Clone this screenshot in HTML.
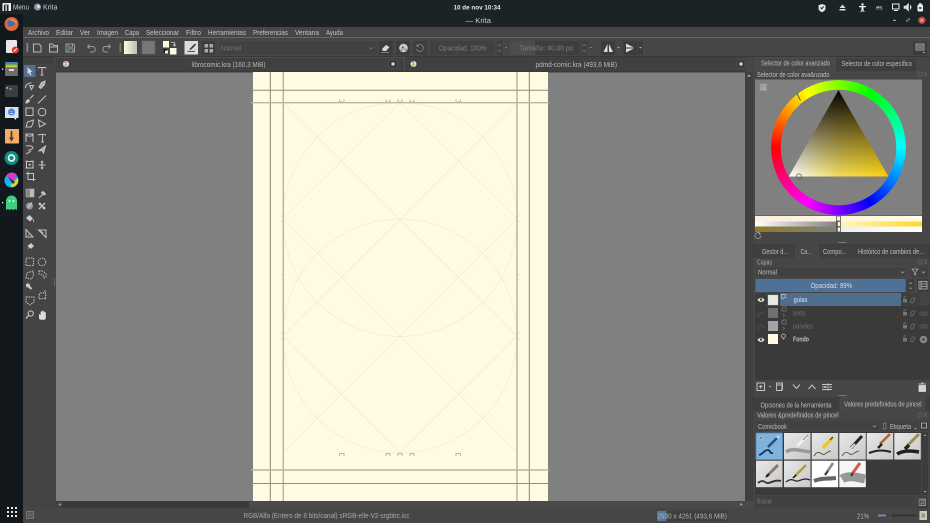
<!DOCTYPE html>
<html lang="es"><head><meta charset="utf-8"><title>Krita</title>
<style>
html,body{margin:0;padding:0;width:930px;height:523px;overflow:hidden;background:#454545}
#w{position:absolute;left:0;top:0;width:930px;height:523px;overflow:hidden;filter:blur(.38px)}
svg{position:absolute;left:0;top:0}
text{font-family:"Liberation Sans",sans-serif;font-size:7.2px;fill:#c4c4c4}
#wheel{position:absolute;left:771px;top:80px;width:135px;height:135px;border-radius:50%;
background:conic-gradient(from 270deg,#f00,#ff0,#0f0,#0ff,#00f,#f0f,#f00);
-webkit-mask:radial-gradient(circle,transparent 57.5px,#000 58px);mask:radial-gradient(circle,transparent 57.5px,#000 58px)}
</style></head><body><div id="w">
<svg width="930" height="523" viewBox="0 0 930 523">
<defs>
<linearGradient id="sw" x1="0" x2="1"><stop offset="0" stop-color="#fffbe3"/><stop offset="1" stop-color="#c2bda8"/></linearGradient>
<linearGradient id="r1" x1="0" x2="1"><stop offset="0" stop-color="#ffeee2"/><stop offset="1" stop-color="#fffce0"/></linearGradient>
<linearGradient id="r2a" x1="0" x2="1"><stop offset="0" stop-color="#fff"/><stop offset="1" stop-color="#808080"/></linearGradient>
<linearGradient id="r2b" x1="0" x2="1"><stop offset="0" stop-color="#fff6c0"/><stop offset="1" stop-color="#ffd72a"/></linearGradient>
<linearGradient id="r3a" x1="0" x2="1"><stop offset="0" stop-color="#8f7c20"/><stop offset="1" stop-color="#808080"/></linearGradient>
<linearGradient id="r3b" x1="0" x2="1"><stop offset="0" stop-color="#eee"/><stop offset="1" stop-color="#fff"/></linearGradient>
<linearGradient id="th" x1="0" x2="1" y1="0" y2="1"><stop offset="0" stop-color="#e8e8e8"/><stop offset="1" stop-color="#c8c8c8"/></linearGradient>
</defs>
<!-- desktop panels -->
<rect width="930" height="27" fill="#1c2327"/>
<rect y="14" width="23" height="509" fill="#12181c"/>
<!-- window background -->
<rect x="23" y="27" width="907" height="496" fill="#464646"/>
<rect x="23" y="37" width="907" height="1" fill="#666"/>
<rect x="23" y="56" width="907" height="1" fill="#383838"/>
<!-- left tool panel -->
<rect x="23" y="57" width="33" height="451" fill="#444"/>
<rect x="23" y="57" width="30" height="7" fill="#3e3e3e"/>
<!-- tab bar -->
<rect x="56" y="57" width="690" height="15" fill="#404040"/>
<rect x="56" y="57" width="348" height="1" fill="#4e4e4e"/>
<rect x="404" y="57" width="1" height="15" fill="#4e4e4e"/>
<!-- canvas -->
<rect x="56" y="72" width="689" height="429" fill="#808080"/>
<rect x="56" y="71" width="689" height="1.5" fill="#3a3a3a"/>
<rect x="253" y="72" width="295" height="429" fill="#fffbe3"/>
<g fill="none" stroke="#efebd4" stroke-width=".7">
<circle cx="400" cy="219.5" r="117"/><circle cx="400" cy="336" r="117"/>
<path d="M283 102.7L517 336M517 102.7L283 336M400 102.7L283 219L517 452.5M400 102.7L517 219L283 452.5M283 336L400 452.5L517 336"/>
</g>
<g fill="none" stroke="#a8a594" stroke-width=".8">
<path d="M339.500 99.500v2.500h4.500v-2.500M386 99.500v2.500h4v-2.500M398 99.500v2.500h4v-2.500M410 99.500v2.500h4v-2.500M456 99.500v2.500h4.500v-2.500"/>
<path d="M339.500 456v-2.500h4.500v2.500M386 456v-2.500h4v2.500M398 456v-2.500h4v2.500M410 456v-2.500h4v2.500M456 456v-2.500h4.500v2.500"/>
</g>
<g fill="none" stroke="#dbd8c2" stroke-width=".8">
<path d="M281 216h3M281 221.500h3M281 274h3M281 280h3M281 333h3M281 339h3M517 216h2.500M517 221.500h2.500M517 274h2.500M517 280h2.500M517 333h2.500M517 339h2.500"/>
</g>
<g fill="none">
<path d="M270.300 72V501M529.300 72V501" stroke="#84847a" stroke-width="1"/>
<path d="M283.300 72V501M517 72V501" stroke="#b8b5a4" stroke-width="1.500"/>
<path d="M251 90.200H549M251 483.500H549" stroke="#8e8c80" stroke-width="1"/>
<path d="M251 102.700H549M251 470H549" stroke="#b8b5a4" stroke-width="1.400"/>
</g>
<!-- scrollbars -->
<rect x="745" y="72" width="8" height="429" fill="#3f3f3f"/>
<path d="M747 76.500l2-2 2 2z" fill="#bbb"/><path d="M747 496l2 2 2-2z" fill="#bbb"/>
<rect x="56" y="501" width="697" height="7" fill="#4a4a4a"/>
<rect x="63" y="501" width="186" height="7" fill="#3a3a3a"/>
<rect x="56" y="501" width="7" height="7" fill="#404040"/>
<path d="M60.500 503l-2 1.500 2 1.500z" fill="#bbb"/><path d="M740.500 503l2 1.500-2 1.500z" fill="#bbb"/>
<rect x="745" y="491" width="8" height="10" fill="#3f3f3f"/>
<!-- top bar text -->
<rect x="2.500" y="3" width="8.500" height="8" fill="#eee"/><rect x="4" y="5" width="1.500" height="6" fill="#1c2327"/><rect x="6.800" y="5" width="1.700" height="6" fill="#1c2327"/><rect x="4" y="3.800" width="4.500" height="1.200" fill="#1c2327" opacity=".35"/>
<text x="13" y="9.500" textLength="16" lengthAdjust="spacingAndGlyphs" style="fill:#d0d0d0">Menu</text>
<circle cx="37.500" cy="7" r="3.500" fill="#8a9aa0"/><circle cx="38.500" cy="6.500" r="1.500" fill="#dde"/>
<text x="43" y="9.500" textLength="14.500" lengthAdjust="spacingAndGlyphs" style="fill:#d0d0d0">Krita</text>
<text x="453.500" y="9.500" textLength="47" lengthAdjust="spacingAndGlyphs" style="fill:#e6e6e6;font-weight:bold;font-size:6.400px">10 de nov  10:34</text>
<text x="465.500" y="23" textLength="25.500" lengthAdjust="spacingAndGlyphs" style="fill:#c8cccc;font-size:7.500px">— Krita</text>
<!-- tray -->
<path d="M822 4l3.500 1.200v3c0 2-1.500 3-3.500 4-2-1-3.500-2-3.500-4v-3z" fill="#e4e4e4"/><path d="M820.500 7.500l1.200 1.300 2-2.300" stroke="#1c2327" fill="none"/>
<path d="M842.500 4.500l3 3.500h-6zM839.500 9h6v1.500h-6z" fill="#ddd"/>
<circle cx="862.500" cy="4.500" r="1.200" fill="#eee"/><path d="M859 6h7v1.200h-2.500v3l1.300 1.800h-1.300l-1-1.500-1 1.500h-1.300l1.300-1.800v-3H859z" fill="#eee"/>
<text x="876" y="9.500" textLength="6.500" style="fill:#ddd;font-size:6.400px">es</text>
<rect x="892.500" y="4" width="6.500" height="5" fill="none" stroke="#eee"/><path d="M894 10.500h4" stroke="#eee"/>
<path d="M904 6h2l2.500-2.500V11L906 8.500h-2zM910 5c1.500 1 1.500 3.500 0 4.500" fill="#ddd" stroke="#ddd" stroke-width=".6"/>
<rect x="917.500" y="4.500" width="5.500" height="7" rx="1" fill="#eee"/><rect x="919" y="3.200" width="2.500" height="1.500" fill="#eee"/><rect x="919" y="7" width="2.500" height="2" fill="#555"/>
<path d="M893 20.300h3" stroke="#bbb"/><path d="M906.500 21.500l3-3M906.500 19.500v2h2M909.500 20.500v-2h-2" stroke="#888" stroke-width=".6" fill="none"/>
<circle cx="921.800" cy="20.300" r="3.700" fill="#c0483c"/><path d="M920.300 18.800l3 3M923.300 18.800l-3 3" stroke="#f0c0b8" stroke-width=".8"/>
<!-- dock -->
<circle cx="11.500" cy="24" r="7" fill="#e2643a"/><circle cx="11.500" cy="23.500" r="4" fill="#3b6fc0"/><path d="M8.500 20c4-3 9 0 8 5-1-2-3-4-8-5z" fill="#f08a3a"/><path d="M10 27c3 1 5-1 5.500-3" stroke="#e86a30" stroke-width="1.500" fill="none"/>
<rect x="6" y="40" width="11" height="13" rx="1" fill="#e8e8e8"/><circle cx="15.300" cy="50" r="3.500" fill="#e0392b"/><path d="M13.800 51.500l3-3" stroke="#fff"/>
<rect x="2" y="68.500" width="1.300" height="1.300" fill="#eee"/>
<rect x="5" y="62" width="13" height="14" rx="1" fill="#6c6c6c"/><rect x="6" y="62" width="11" height="2" fill="#4a7fc4"/><rect x="6" y="64" width="11" height="1.500" fill="#4fb36a"/><rect x="6" y="65.500" width="11" height="1.700" fill="#e8c53a"/><rect x="9" y="69" width="5" height="2" fill="#ddd"/>
<rect x="5" y="85" width="13" height="12" rx="1" fill="#3d3d3d"/><path d="M6.500 87.500h1.500M6.500 88.500l1.500-.5M9 89h3" stroke="#ccc" stroke-width=".7"/>
<path d="M5 107h13.500v11h-2l-1 2-1.500-2H5z" fill="#dfe3e8"/><circle cx="11.500" cy="112" r="3.500" fill="#4a86d8"/><path d="M10 111.500h.6M12.500 111.500h.6M10 113.500h3" stroke="#e8f0fa" stroke-width=".7"/>
<rect x="5" y="129" width="14" height="14.500" rx=".7" fill="#f3ab66"/><path d="M11.500 131v8" stroke="#4a3a28" stroke-width="1.700"/><path d="M9 137.500l2.500 4 2.500-4z" fill="#4a3a28"/>
<circle cx="11.500" cy="158" r="7" fill="#0b8f80"/><circle cx="11.500" cy="158" r="3" fill="none" stroke="#e8f4f0" stroke-width="1.700"/>
<circle cx="11.500" cy="180.500" r="7" fill="#17b4e4"/><path d="M6 176c2-4 8-5 11-1l-3 6z" fill="#d938c8"/><path d="M17.800 178c1.500 4-1 8.500-6 9-1.500-1.500-1-3 1-4z" fill="#f5d11c"/><path d="M8 177l7 5-2 2z" fill="#2a2a3a"/>
<rect x="2" y="202" width="1.300" height="1.300" fill="#eee"/>
<path d="M6 210V201a5.500 5.500 0 0 1 11 0v9l-2-1-1.800 1-1.700-1-1.700 1-1.800-1z" fill="#3ecf80"/><circle cx="9.500" cy="201" r="1" fill="#eee"/><circle cx="13.500" cy="201" r="1" fill="#eee"/>
<g fill="#e8e8e8"><rect x="7" y="507" width="2" height="2"/><rect x="11" y="507" width="2" height="2"/><rect x="15" y="507" width="2" height="2"/><rect x="7" y="511" width="2" height="2"/><rect x="11" y="511" width="2" height="2"/><rect x="15" y="511" width="2" height="2"/><rect x="7" y="515" width="2" height="2"/><rect x="11" y="515" width="2" height="2"/><rect x="15" y="515" width="2" height="2"/></g>
<!-- menu -->
<g>
<text x="28" y="35" textLength="21" lengthAdjust="spacingAndGlyphs">Archivo</text>
<text x="56" y="35" textLength="17" lengthAdjust="spacingAndGlyphs">Editar</text>
<text x="80" y="35" textLength="10" lengthAdjust="spacingAndGlyphs">Ver</text>
<text x="97" y="35" textLength="21" lengthAdjust="spacingAndGlyphs">Imagen</text>
<text x="125" y="35" textLength="14" lengthAdjust="spacingAndGlyphs">Capa</text>
<text x="146" y="35" textLength="33" lengthAdjust="spacingAndGlyphs">Seleccionar</text>
<text x="186" y="35" textLength="15" lengthAdjust="spacingAndGlyphs">Filtro</text>
<text x="208" y="35" textLength="38" lengthAdjust="spacingAndGlyphs">Herramientas</text>
<text x="253" y="35" textLength="35" lengthAdjust="spacingAndGlyphs">Preferencias</text>
<text x="295" y="35" textLength="24" lengthAdjust="spacingAndGlyphs">Ventana</text>
<text x="326" y="35" textLength="17" lengthAdjust="spacingAndGlyphs">Ayuda</text>
</g>
<!-- toolbar -->
<rect x="26.500" y="43" width="1.700" height="9" fill="#888"/>
<g fill="none" stroke="#b8b8b8" stroke-width="1">
<path d="M33.500 44h5.500l2 2v6h-7.500z"/>
<path d="M49.500 44h3l1 1.500h4v6.500h-8z"/><path d="M49.500 47h8"/>
<path d="M66 44h7.500l1 1v7h-8.500zM68 44v3h4.500v-3M68 52v-3h5v3" stroke="#9a9a9a"/>
<path d="M87.500 46.500h5c3.500 0 3.500 5.500 0 5.500H90M87.500 46.500l2-2M87.500 46.500l2 2" stroke="#9c9c9c"/>
<path d="M110.500 46.500h-5c-3.500 0-3.500 5.500 0 5.500h2.500M110.500 46.500l-2-2M110.500 46.500l-2 2" stroke="#9c9c9c"/>
</g>
<rect x="119.500" y="43" width="1.700" height="9" fill="#777"/>
<rect x="124" y="41" width="13" height="13" fill="url(#sw)"/>
<rect x="142" y="41" width="13" height="13" fill="#777" stroke="#666" stroke-width=".6"/>
<rect x="163" y="41" width="6" height="6.500" fill="#fffbe3"/><rect x="170" y="48" width="6.500" height="6.500" fill="#fffbe3"/>
<rect x="163.500" y="49" width="3.500" height="3.500" fill="#111"/><rect x="165" y="50.500" width="3" height="3" fill="#eee"/>
<path d="M171 42.500h3.500v3M173 44.500l1.500 1.500 1.500-1.500" stroke="#ccc" fill="none" stroke-width=".8"/>
<rect x="184.500" y="41" width="13.500" height="13.500" rx=".5" fill="#dcdcdc"/><path d="M195 44l-4 4-1 1.500 1.500-.7 4-4zM187.500 52c3-2 4.500 .5 7.500-1" stroke="#333" stroke-width=".7" fill="#444"/>
<rect x="202" y="41" width="13" height="13.500" rx="1" fill="#3c3c3c"/><g fill="#a8a8a8"><rect x="204.500" y="44" width="3.500" height="3.500"/><rect x="209.500" y="44" width="3.500" height="3.500"/><rect x="204.500" y="49" width="3.500" height="3.500"/><rect x="209.500" y="49" width="3.500" height="3.500"/></g>
<rect x="219" y="41" width="159" height="14" fill="#414141" stroke="#4c4c4c" stroke-width=".6"/>
<text x="221" y="50.500" textLength="20" lengthAdjust="spacingAndGlyphs" style="fill:#767676">Normal</text>
<path d="M369.500 47.500l1.500 1.500 1.500-1.500" fill="none" stroke="#707070"/>
<rect x="379" y="41" width="14" height="14" rx="1" fill="#3c3c3c"/><path d="M382 49l4-4 3.500 2-3.500 4h-3z" fill="#d8d8d8"/><path d="M381 52.500h8" stroke="#999" stroke-width=".7"/>
<rect x="396" y="41" width="14" height="14" rx="1" fill="#3c3c3c"/><circle cx="403.500" cy="48" r="4.300" fill="#ccc"/><circle cx="403" cy="47.500" r="1.200" fill="#666"/><circle cx="405.500" cy="49.500" r="1" fill="#777"/><circle cx="401.500" cy="50" r="1" fill="#888"/>
<rect x="413" y="41" width="14" height="14" rx="1" fill="#3e3e3e"/><path d="M417 46a3.500 3.500 0 1 1-.5 3M417 44.500V46.500h2" stroke="#888" fill="none" stroke-width=".8"/>
<rect x="431" y="41" width="64" height="14" fill="#404040"/>
<text x="439" y="50.500" textLength="47.500" lengthAdjust="spacingAndGlyphs" style="fill:#7c7c7c">Opacidad:  100%</text>
<rect x="497" y="41" width="5" height="14" fill="#3e3e3e"/><path d="M498 46l1.500-1.500L501 46M498 50l1.500 1.500L501 50" stroke="#888" fill="none" stroke-width=".6"/>
<path d="M505 47.500h2" stroke="#777"/>
<rect x="510" y="41" width="26" height="14" fill="#4c4c4c"/><rect x="535" y="41" width="45" height="14" fill="#3e3e3e"/>
<text x="519.500" y="50.500" textLength="53.500" lengthAdjust="spacingAndGlyphs" style="fill:#7e7e7e">Tamaño:  40,00 px</text>
<rect x="582" y="41" width="5" height="14" fill="#3e3e3e"/><path d="M583 46l1.500-1.500L586 46M583 50l1.500 1.500L586 50" stroke="#888" fill="none" stroke-width=".6"/>
<path d="M590 47.500h2" stroke="#777"/>
<rect x="601" y="41" width="14" height="14" rx="1" fill="#3c3c3c"/><path d="M607.500 44v8h-4zM609 44v8h4z" fill="#ddd"/>
<path d="M617 47l1.500 1.500L620 47z" fill="#aaa"/>
<rect x="623" y="41" width="14" height="14" rx="1" fill="#3c3c3c"/><path d="M626 43.500l8 4-8 0zM626 48.500h8l-8 4z" fill="#ddd"/>
<rect x="638" y="41" width="5" height="14" fill="#3c3c3c"/><path d="M639 47l1.500 1.500L642 47z" fill="#aaa"/>
<rect x="913" y="41" width="14" height="14" rx="1" fill="#3c3c3c"/><path d="M916 44h8v6h-8zM917 46h6M917 48h6M923 52l2 1" stroke="#aaa" fill="none" stroke-width=".9"/>
<!-- tabs -->
<circle cx="66" cy="64" r="3" fill="#e6e6e6"/><path d="M64 62.500l2-1.500 1 3z" fill="#d060c0"/><path d="M64 65l3-1-1 3z" fill="#2fb4e0"/><path d="M67 63l1 2-2 1z" fill="#f0d030"/>
<text x="191.500" y="67" textLength="74" lengthAdjust="spacingAndGlyphs" style="fill:#b8b8b8">librocomic.kra (160,3 MiB)</text>
<rect x="389" y="60" width="8" height="8" rx="1" fill="#333" stroke="#666" stroke-width=".5"/><rect x="391.500" y="62.500" width="3" height="3" fill="#ddd"/>
<circle cx="413.500" cy="64" r="3" fill="#e6e6e6"/><path d="M411.500 62.500l2-1.500 1 3z" fill="#d060c0"/><path d="M411.500 65l3-1-1 3z" fill="#2fb4e0"/><path d="M414.500 63l1 2-2 1z" fill="#f0d030"/>
<text x="535.500" y="67" textLength="81.500" lengthAdjust="spacingAndGlyphs" style="fill:#b8b8b8">pdmd-comic.kra (493,6 MiB)</text>
<rect x="737" y="60" width="8" height="8" rx="1" fill="#333" stroke="#666" stroke-width=".5"/><rect x="739.500" y="62.500" width="3" height="3" fill="#ddd"/>
<!-- tools -->
<rect x="24" y="65" width="11.500" height="12" fill="#546f8e"/>
<path d="M27.500 67l5 5-2.300.2 1.300 2.800-1.300.5-1.200-2.800-1.500 1.500z" fill="#d8d8d8"/>
<g fill="none" stroke="#c4c4c4" stroke-width="1">
<path d="M38.500 68.500v-1h7v1M42 67.500v7.500M40.500 75h3" stroke-width="1.100"/>
<path d="M25.500 88c0-3 2-5 6-5M29.500 85.500h4l-2 4z"/>
<path d="M39 87l2.500-4.500 3.500-1.500-.5 3.500-3.500 4z" fill="#b0b0b0"/>
<path d="M33.500 95l-3.500 3.500M26 103c0-2 1-3 2.500-3.500l1 1.500c-1 1.500-2 2-3.500 2z" fill="#ccc"/>
<path d="M38 103.500L46 95.500"/>
<rect x="26" y="108" width="7" height="7.500"/>
<circle cx="42" cy="112" r="3.800"/>
<path d="M26 127l1.500-5 6-2-1 4.500-1.500 2.500z"/>
<path d="M38.500 120l7 4-6 3z"/>
<path d="M26 142v-8h7v8M26 134c1 3 6 3 7 0"/>
<path d="M38 135c3-1 5-1 8 0M42.500 135v7M41 142h3"/>
<path d="M26 146c3-.5 6 0 7 1.500 0 1.500-3 2.500-5 3M26 154c2-1 4-2 5-3"/>
<path d="M38.500 151l7-5-2 7-1.500-2.500z" fill="#aaa"/>
<rect x="26.500" y="161.500" width="6.500" height="6.500"/><circle cx="29.700" cy="164.700" r=".6" fill="#ccc"/><path d="M25 161h3M25 168h3M31 161h3M31 168h3" stroke-width=".5"/>
<path d="M42 161.500v7M38.500 165h7M40.800 162.500L42 161l1.200 1.500M40.800 167.500L42 169l1.200-1.500" stroke-width="1"/>
<path d="M26 173.500h7.500V181M28 171.500V179.500H35.500" stroke-width="1"/>
</g>
<!-- tools lower -->
<rect x="26" y="189" width="8" height="8" fill="#888" stroke="#aaa" stroke-width=".6"/><rect x="30" y="189" width="4" height="8" fill="#bbb"/>
<path d="M39 198l5-5M43 191.500l2.500 2.500-1.500 1-2.500-2.500z" stroke="#c4c4c4" fill="#c4c4c4" stroke-width="1"/>
<circle cx="29.500" cy="206" r="3.500" fill="#999"/><path d="M28 207.500l4-5" stroke="#ddd"/>
<path d="M39 203l6 6M45 203l-6 6" stroke="#c4c4c4" stroke-width="1.300"/><circle cx="40" cy="204" r="1.300" fill="#ccc"/><circle cx="44" cy="208" r="1.300" fill="#ccc"/>
<path d="M26 218l3.500-3 3.500 3.500-3 3z" fill="#ccc"/><path d="M33 219.500c1 1 1 2 0 2.500" stroke="#d0b060" fill="none"/>
<path d="M26 237v-7.500l7 7.500zM28 235h1.500" fill="none" stroke="#c4c4c4" stroke-width="1"/>
<path d="M38.500 230h7.500v7.500zM38.500 230l5 3" fill="none" stroke="#c4c4c4" stroke-width="1"/>
<path d="M26.500 250l2.500-2.500-1.500-1.500 3.500-3 3 3-3 3-1-1.500z" fill="#ccc"/>
<g fill="none" stroke="#c4c4c4" stroke-width="1" stroke-dasharray="1.500 1">
<rect x="26" y="258" width="7.500" height="7.500"/>
<circle cx="42" cy="262" r="3.800"/>
<path d="M26 278l1-5 6-2 .5 4-2 4z"/>
<path d="M39 271h4l3 3v3l-2 1-1-3-4-1z"/>
<path d="M39 295l1-2h4l1-2 1 4-1 2 1 2-4-.5-3 .5z"/>
<path d="M26 297h8v5l-4 3-4-3z"/>
</g>
<path d="M26.500 284l5 5" stroke="#ccc" stroke-width="2"/><circle cx="28" cy="285.500" r="2" fill="#ccc"/>
<circle cx="30.700" cy="313.500" r="2.600" fill="none" stroke="#ccc"/><path d="M28.500 315.500l-2.500 3" stroke="#ccc" stroke-width="1.200"/>
<path d="M39 314v4c0 1.200 1 1.800 2 1.800h3c1.200 0 1.800-1 1.800-2v-5.500h-1.200v-.8h-1.300v-.8h-1.300v.8H40.600v3.500z" fill="#ddd"/>
<path d="M54.500 278v8" stroke="#666" stroke-width="1"/>
<!-- status bar -->
<rect x="26.500" y="511.500" width="7" height="7" fill="#555" stroke="#888" stroke-width=".7"/><rect x="28.500" y="513.500" width="3" height="3" fill="#666"/>
<text x="243.500" y="518" textLength="166" lengthAdjust="spacingAndGlyphs" style="fill:#aaa">RGB/Alfa (Entero de 8 bits/canal)  sRGB-elle-V2-srgbtrc.icc</text>
<rect x="656.500" y="511" width="71.500" height="10" fill="#3e3e3e"/><rect x="657" y="511" width="9.500" height="10" fill="#56789c"/>
<text x="657.500" y="518.500" textLength="69.500" lengthAdjust="spacingAndGlyphs" style="fill:#b4b4b4">2930 x 4261 (493,6 MiB)</text>
<text x="857" y="518.500" textLength="12" lengthAdjust="spacingAndGlyphs" style="fill:#b4b4b4">21%</text>
<rect x="878" y="514.500" width="39" height="2" fill="#333"/><rect x="878" y="514.500" width="9" height="2" fill="#6a8eb2"/><rect x="886" y="512" width="5" height="6.500" rx="1" fill="#444" stroke="#555" stroke-width=".5"/>
<rect x="919.500" y="511" width="7.500" height="9" fill="#c8c8c8"/><rect x="921.500" y="513.500" width="3.500" height="4" fill="#8fa070"/>
<!-- right dock: color -->
<rect x="753" y="57" width="177" height="186" fill="#464646"/>
<rect x="755" y="57.500" width="80" height="13" rx="1" fill="#484848" stroke="#555" stroke-width=".5"/>
<rect x="836" y="59" width="80" height="12" fill="#3e3e3e"/>
<text x="761" y="65.500" textLength="69" lengthAdjust="spacingAndGlyphs" style="fill:#bdbdbd">Selector de color avanzado</text>
<text x="841.500" y="66" textLength="70.500" lengthAdjust="spacingAndGlyphs" style="fill:#bdbdbd">Selector de color específico</text>
<text x="757" y="77" textLength="72.500" lengthAdjust="spacingAndGlyphs" style="fill:#c0c0c0">Selector de color ava&amp;nzado</text>
<path d="M918 72h4v4h-4zM924 72l3 4M927 72l-3 4" stroke="#666" fill="none" stroke-width=".7"/>
<rect x="755" y="79.500" width="167" height="136" fill="#808080"/>
<rect x="760" y="84" width="6.500" height="6.500" fill="#aaa" stroke="#999" stroke-width=".5"/><path d="M760 86h6.500M762 86v4.500" stroke="#777" stroke-width=".5"/>
<rect x="755" y="216" width="167" height="5.500" fill="url(#r1)"/>
<rect x="755" y="221.500" width="83" height="5" fill="url(#r2a)"/><rect x="838" y="221.500" width="84" height="5" fill="url(#r2b)"/>
<rect x="755" y="226.500" width="83" height="5.500" fill="url(#r3a)"/><rect x="838" y="226.500" width="84" height="5.500" fill="url(#r3b)"/>
<g fill="none" stroke="#444" stroke-width=".7"><rect x="836.500" y="216" width="4" height="5"/><rect x="836.500" y="221.500" width="4" height="5"/><rect x="836.500" y="227" width="4" height="5"/></g>
<path d="M761 235.500a3 3 0 1 1-.8-2M759 232v2h2" stroke="#aaa" stroke-width=".7" fill="none"/>
<rect x="838.500" y="242" width="8" height="1" fill="#777"/>
<!-- layers docker -->
<rect x="753" y="244" width="177" height="14" fill="#3e3e3e"/>
<rect x="795.500" y="245" width="23" height="14" rx="1" fill="#474747" stroke="#555" stroke-width=".4"/>
<rect x="757" y="246" width="36" height="12" fill="#404040"/><rect x="820" y="246" width="33" height="12" fill="#404040"/><rect x="854" y="246" width="74" height="12" fill="#404040"/>
<rect x="753" y="258" width="177" height="130" fill="#464646"/>
<text x="762" y="254" textLength="26" lengthAdjust="spacingAndGlyphs" style="fill:#bdbdbd">Gestor d...</text>
<text x="800.500" y="254" textLength="11" lengthAdjust="spacingAndGlyphs" style="fill:#bdbdbd">Ca...</text>
<text x="823" y="254" textLength="23.500" lengthAdjust="spacingAndGlyphs" style="fill:#bdbdbd">Compo...</text>
<text x="858" y="254" textLength="66" lengthAdjust="spacingAndGlyphs" style="fill:#bdbdbd">Histórico de cambios de...</text>
<text x="757" y="264.500" textLength="15" lengthAdjust="spacingAndGlyphs" style="fill:#aaa">Capas</text>
<path d="M918 260h4v4h-4zM924 260l3 4M927 260l-3 4" stroke="#666" fill="none" stroke-width=".7"/>
<rect x="755.500" y="267" width="151" height="10" fill="#414141" stroke="#4e4e4e" stroke-width=".5"/>
<text x="758" y="274.500" textLength="19" lengthAdjust="spacingAndGlyphs" style="fill:#bdbdbd">Normal</text>
<path d="M901 271.500l1.500 1.500 1.500-1.500" fill="none" stroke="#aaa" stroke-width=".7"/>
<rect x="910" y="267" width="18" height="10" rx="1" fill="#414141"/><path d="M912 269h6l-2.300 3v3l-1.400-.7V272z" fill="none" stroke="#aaa" stroke-width=".8"/><path d="M922 271.500l1.500 1.500 1.500-1.500" fill="none" stroke="#aaa" stroke-width=".7"/>
<rect x="755.500" y="279" width="150" height="13" fill="#4f7195"/>
<text x="810.500" y="288" textLength="41.500" lengthAdjust="spacingAndGlyphs" style="fill:#dcdcdc">Opacidad:  99%</text>
<rect x="907" y="279" width="7" height="13" fill="#3e3e3e"/><path d="M909 284l1.500-1.500L912 284M909 287.500l1.500 1.500 1.500-1.500" stroke="#aaa" fill="none" stroke-width=".6"/>
<rect x="917" y="279" width="11.500" height="13" rx="1" fill="#3c3c3c"/><path d="M919 281.500h8v7.500h-8zM921 281.500v7.500M921 284h6M921 286.500h6" stroke="#bbb" fill="none" stroke-width=".8"/>
<rect x="755" y="293" width="175" height="92" fill="#3a3a3a"/>
<rect x="755" y="293" width="146" height="13" fill="#4e6e8e"/>
<rect x="755" y="293" width="25" height="13" fill="#3c3c3c"/><rect x="780" y="293" width="6.500" height="13" fill="#4e6e8e"/>
<rect x="901" y="293" width="29" height="13" fill="#3e3e3e"/>
<rect x="920" y="293.500" width="9" height="12" fill="#444"/>
<path d="M757.500 300c2-3 5-3 7 0-2 2.500-5 2.500-7 0z" fill="#eee"/><circle cx="761" cy="299.500" r="1.300" fill="#444"/>
<path d="M757.500 340c2-3 5-3 7 0-2 2.500-5 2.500-7 0z" fill="#eee"/><circle cx="761" cy="339.500" r="1.300" fill="#444"/>
<path d="M757.500 315c1.500-3 5.500-3 7 0M757.500 315c1 1.500 1.500 2 2 2.500" stroke="#555" fill="none" stroke-width=".8"/>
<path d="M757.500 328c1.500-3 5.500-3 7 0M757.500 328c1 1.500 1.500 2 2 2.500" stroke="#555" fill="none" stroke-width=".8"/>
<rect x="768" y="295" width="10" height="10" fill="#e8e8e8" stroke="#ccc" stroke-width=".4"/>
<rect x="768" y="308" width="10" height="10" fill="#707070"/>
<rect x="768" y="321" width="10" height="10" fill="#a4a4a4"/>
<rect x="768" y="334" width="10" height="10" fill="#fffbe3"/>
<g fill="none" stroke="#ccc" stroke-width=".7">
<path d="M781.500 294.500h4v3l-3.500 1.500z"/>
<path d="M783 308v-1h3v4h-4v-3zM783 314l1.500 1.500L783 317" stroke="#777"/>
<path d="M783 321v-1h3v4h-4v-3zM783 327l1.500 1.500L783 330" stroke="#777"/>
<circle cx="783.500" cy="336" r="2"/><path d="M782.500 339h2"/>
</g>
<text x="793.500" y="302" textLength="14" lengthAdjust="spacingAndGlyphs" style="font-weight:bold;fill:#c0ccd8">guias</text>
<text x="793" y="315.500" textLength="12.500" lengthAdjust="spacingAndGlyphs" style="fill:#6f6f6f">texto</text>
<text x="793" y="328.500" textLength="20" lengthAdjust="spacingAndGlyphs" style="fill:#6f6f6f">paneles</text>
<text x="793" y="341.500" textLength="16" lengthAdjust="spacingAndGlyphs" style="font-weight:bold;fill:#bdbdbd">Fondo</text>
<g fill="#777">
<rect x="903" y="299" width="4" height="3.500"/><rect x="903" y="312" width="4" height="3.500"/><rect x="903" y="325" width="4" height="3.500"/><rect x="903" y="338" width="4" height="3.500"/>
</g>
<g fill="none" stroke="#777" stroke-width=".7">
<path d="M904 299v-1.500c0-1 2-1 2 0M904 312v-1.500c0-1 2-1 2 0M904 325v-1.500c0-1 2-1 2 0M904 338v-1.500c0-1 2-1 2 0"/>
<path d="M917 298c-3-1-5 5-2 5 2 0 2-5 3.500-5M917 311c-3-1-5 5-2 5 2 0 2-5 3.500-5M917 324c-3-1-5 5-2 5 2 0 2-5 3.500-5M917 337c-3-1-5 5-2 5 2 0 2-5 3.500-5" transform="translate(-3 0)"/>
<path d="M920 312h3v3h-3zM924 312h3v3h-3zM920 325h3v3h-3zM924 325h3v3h-3z" stroke="#5e5e5e"/>
</g>
<circle cx="923.500" cy="339.500" r="3.800" fill="#888"/><circle cx="923.500" cy="339.500" r="1.300" fill="#444"/>
<!-- layer buttons -->
<rect x="753" y="380" width="177" height="14" fill="#464646"/>
<rect x="757" y="383" width="7.500" height="7.500" fill="none" stroke="#c4c4c4"/><path d="M759 386.700h3.500M760.700 385v3.500" stroke="#ddd" stroke-width=".8"/>
<path d="M768.500 386l1.500 1.500 1.500-1.500z" fill="#aaa"/>
<path d="M778 385h-1.500v-2h6v6h-1.500M778.500 385h3.500v5.500h-5.500v-5.500z" fill="none" stroke="#c4c4c4" stroke-width=".9"/>
<path d="M793 384.500l3.500 4 3.500-4M808.500 389l3.500-4 3.500 4" fill="none" stroke="#c4c4c4" stroke-width="1"/>
<path d="M822 384.500h10M822 387h10M822 389.500h10" stroke="#c4c4c4" stroke-width=".9"/><circle cx="828" cy="384.500" r="1" fill="#ccc"/><circle cx="825" cy="387" r="1" fill="#ccc"/><circle cx="828" cy="389.500" r="1" fill="#ccc"/>
<path d="M919 385.500h6.500v6h-6.500zM918.500 384h7.500M921 383h2.500" stroke="#ddd" fill="#d4d4d4" stroke-width=".8"/>
<rect x="838.500" y="395" width="8" height="1" fill="#777"/>
<!-- preset docker -->
<rect x="753" y="397" width="177" height="14" fill="#3e3e3e"/>
<rect x="840" y="397.500" width="85" height="13" rx="1" fill="#474747" stroke="#555" stroke-width=".4"/>
<text x="760.500" y="407.500" textLength="71" lengthAdjust="spacingAndGlyphs" style="fill:#bdbdbd">Opciones de la herramienta</text>
<text x="844" y="406.500" textLength="77.500" lengthAdjust="spacingAndGlyphs" style="fill:#bdbdbd">Valores predefinidos de pincel</text>
<text x="757" y="417.500" textLength="81.500" lengthAdjust="spacingAndGlyphs" style="fill:#bdbdbd">Valores &amp;predefinidos de pincel</text>
<path d="M918 413h4v4h-4zM924 413l3 4M927 413l-3 4" stroke="#666" fill="none" stroke-width=".7"/>
<rect x="755.500" y="421" width="124" height="10" fill="#414141"/>
<text x="758" y="429" textLength="29" lengthAdjust="spacingAndGlyphs" style="fill:#bdbdbd">Comicbook</text>
<path d="M873 425.500l1.500 1.500 1.500-1.500" fill="none" stroke="#aaa" stroke-width=".7"/>
<rect x="881.500" y="421" width="37" height="10" fill="#414141"/><rect x="883.500" y="423" width="2.500" height="6" fill="none" stroke="#aaa" stroke-width=".5"/>
<text x="890" y="429" textLength="21" lengthAdjust="spacingAndGlyphs" style="fill:#bdbdbd">Etiqueta</text>
<path d="M914 428l1.500 1.500 1.500-1.500z" fill="#aaa"/>
<rect x="920" y="421" width="8.500" height="10" rx="1" fill="#3c3c3c"/><path d="M921.500 423h5v5h-5z" fill="none" stroke="#bbb" stroke-width=".8"/>
<rect x="755" y="432" width="166" height="63" fill="#3a3a3a"/>
<rect x="922" y="432" width="6" height="63" fill="#3c3c3c"/><path d="M923.500 436l1.500-1.500 1.500 1.500zM923.500 491l1.500 1.500 1.500-1.500z" fill="#aaa"/>
<!-- thumbs row 1 -->
<rect x="756" y="433" width="26.500" height="26.500" fill="#7fb2dc" stroke="#5a8db5" stroke-width=".8"/>
<path d="M759 455c4-1 5-5 9-5 3 0 1 4 5 3" stroke="#16305c" stroke-width="1.800" fill="none"/><path d="M768 447l9-9" stroke="#2a4c7a" stroke-width="2.500"/><path d="M777 438l2-2" stroke="#cde" stroke-width="2"/><path d="M760 436l3 3-2 0-1-1z" fill="#234" stroke="#fff" stroke-width=".4"/>
<rect x="784" y="433" width="26.500" height="26.500" fill="url(#th)"/><path d="M786 452c5-4 12-2 24 0" stroke="#999" stroke-width="3.500" fill="none"/><path d="M797 446l10-10" stroke="#f0f0f0" stroke-width="3"/><path d="M803 440l5-5" stroke="#888" stroke-width="1"/>
<rect x="811.700" y="433" width="26.500" height="26.500" fill="url(#th)"/><path d="M814 456c3-5 5-4 8-2s5-3 9-3" stroke="#333" stroke-width=".8" fill="none"/><path d="M823 448l10-11" stroke="#e6c92a" stroke-width="3.500"/><path d="M830 440l3-3" stroke="#333" stroke-width="1"/>
<rect x="839.300" y="433" width="26.500" height="26.500" fill="url(#th)"/><path d="M842 456c3-5 5-4 8-2s5-3 9-3" stroke="#444" stroke-width=".8" fill="none"/><path d="M851 448l11-12" stroke="#222" stroke-width="3"/><path d="M851 448l4-4" stroke="#ddd" stroke-width="2"/>
<rect x="866.700" y="433" width="26.500" height="26.500" fill="url(#th)"/><path d="M869 453c6-2 12-4 22-1" stroke="#222" stroke-width="2" fill="none"/><path d="M880 444l10-10" stroke="#b0602a" stroke-width="2.500"/><path d="M878 448l4-4" stroke="#222" stroke-width="2.500"/>
<rect x="894.300" y="433" width="26.500" height="26.500" fill="url(#th)"/><path d="M897 454c5-3 12-4 22-2" stroke="#222" stroke-width="3.500" fill="none"/><path d="M908 445l11-11" stroke="#a08a58" stroke-width="3"/><path d="M905 449l4-4" stroke="#222" stroke-width="3.500"/>
<!-- thumbs row 2 -->
<rect x="756" y="460.700" width="26.500" height="26.500" fill="url(#th)"/><path d="M758 483c5-4 6-1 9 0s7-4 14-2" stroke="#333" stroke-width="1.800" fill="none"/><path d="M767 476l11-11" stroke="#8a7a68" stroke-width="3"/><path d="M766 477l3-3" stroke="#222" stroke-width="2"/>
<rect x="784" y="460.700" width="26.500" height="26.500" fill="url(#th)"/><path d="M786 482c5-4 7-2 10-1s7-4 14-1" stroke="#222" stroke-width="1.300" fill="none"/><path d="M795 476l11-11" stroke="#b0a030" stroke-width="2.500"/><path d="M793 478l3-3" stroke="#111" stroke-width="1.500"/>
<rect x="811.700" y="460.700" width="26.500" height="26.500" fill="#fff"/><path d="M814 481c6-3 14-2 22-3" stroke="#666" stroke-width="4" fill="none"/><path d="M825 475l8-12" stroke="#888" stroke-width="2.500"/><path d="M825 475l3-4" stroke="#333" stroke-width="1.500"/>
<rect x="839.300" y="460.700" width="26.500" height="26.500" fill="#f6f6f6"/><path d="M842 479c6-4 14-2 23 0" stroke="#777" stroke-width="9" fill="none" opacity=".75"/><path d="M852 474l8-11" stroke="#d05a42" stroke-width="3"/><path d="M851 476l2-3" stroke="#222" stroke-width="1.500"/>
<!-- search -->
<rect x="755" y="496" width="160" height="12" fill="#414141"/>
<text x="757" y="503.500" textLength="15" lengthAdjust="spacingAndGlyphs" style="fill:#7a7a7a">Buscar</text>
<rect x="916.500" y="496.500" width="11.500" height="11.500" rx="1" fill="#3c3c3c"/><path d="M919 499h6.500v6.500H919zM921 499v2h3v-2M921 505.500v-2.500h3v2.500" stroke="#aaa" fill="none" stroke-width=".7"/>
</svg>
<div id="wheel"></div>
<svg width="930" height="523" viewBox="0 0 930 523">
<defs>
<linearGradient id="tb" gradientUnits="userSpaceOnUse" x1="790" x2="888" y1="0" y2="0"><stop offset="0" stop-color="#fff"/><stop offset=".5" stop-color="#f4dc5c"/><stop offset="1" stop-color="#fcd20c"/></linearGradient>
<linearGradient id="tk" gradientUnits="userSpaceOnUse" x1="0" x2="0" y1="90" y2="177"><stop offset="0" stop-color="#000"/><stop offset="1" stop-color="#000" stop-opacity="0"/></linearGradient>
</defs>
<polygon points="838.500,90 788.700,176.500 888.300,176.500" fill="url(#tb)"/>
<polygon points="838.500,90 788.700,176.500 888.300,176.500" fill="url(#tk)"/>
<circle cx="799" cy="176.500" r="2.600" fill="none" stroke="#555" stroke-width=".7"/>
<path d="M797 93.500l3.500 7" stroke="#333" stroke-width=".8"/>
</svg>
</div></body></html>
